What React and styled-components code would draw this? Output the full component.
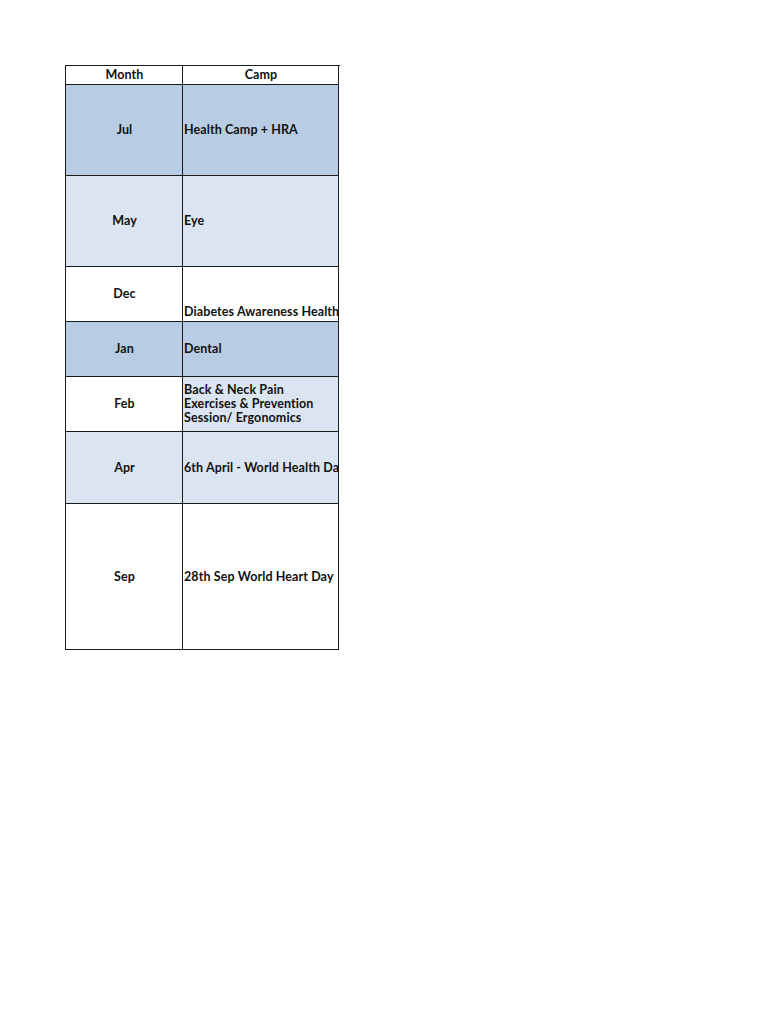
import React from "react";
import styled, { createGlobalStyle } from "styled-components";

const Global = createGlobalStyle`
  html, body { margin: 0; padding: 0; background: #fff; }
  body { width: 768px; height: 1024px; font-family: "Lato", "Liberation Sans", sans-serif; }
`;

const Page = styled.div`
  padding: 65px 0 0 65px;
`;

const Table = styled.div`
  display: grid;
  grid-template-columns: 117px 156px;
  width: 274px;
  border-top: 1px solid #1a1a1a;
  border-left: 1px solid #1a1a1a;
`;

const Cell = styled.div`
  height: ${(p) => p.$h}px;
  box-sizing: border-box;
  background: ${(p) => p.$bg || "#fff"};
  border-right: 1px solid #1a1a1a;
  border-bottom: 1px solid #1a1a1a;
  display: flex;
  align-items: ${(p) => (p.$bottom ? "flex-end" : "center")};
  justify-content: ${(p) => (p.$center ? "center" : "flex-start")};
  padding: ${(p) => (p.$bottom ? "0 0 2px 1px" : "0 0 0 1px")};
  overflow: hidden;
  font-size: 12.5px;
  font-weight: 700;
  color: #111;
  line-height: 14px;
  letter-spacing: 0.1px;
`;

const Text = styled.span`
  white-space: nowrap;
  text-align: ${(p) => (p.$center ? "center" : "left")};
`;

const DARK = "#b8cce4";
const LIGHT = "#dbe5f1";

const rows = [
  { m: "Month", c: ["Camp"], h: 19, mb: "#fff", cb: "#fff", head: true },
  { m: "Jul", c: ["Health Camp + HRA"], h: 91, mb: DARK, cb: DARK },
  { m: "May", c: ["Eye"], h: 91, mb: LIGHT, cb: LIGHT },
  { m: "Dec", c: ["Diabetes Awareness Health Talk"], h: 55, mb: "#fff", cb: "#fff", bottom: true },
  { m: "Jan", c: ["Dental"], h: 55, mb: DARK, cb: DARK },
  { m: "Feb", c: ["Back & Neck Pain", "Exercises & Prevention", "Session/ Ergonomics"], h: 55, mb: "#fff", cb: LIGHT },
  { m: "Apr", c: ["6th April - World Health Day"], h: 72, mb: LIGHT, cb: LIGHT },
  { m: "Sep", c: ["28th Sep World Heart Day"], h: 146, mb: "#fff", cb: "#fff" },
];

export default function App() {
  return (
    <>
      <Global />
      <Page>
        <Table>
          {rows.map((r) => (
            <React.Fragment key={r.m}>
              <Cell $h={r.h} $bg={r.mb} $center>
                <Text $center>{r.m}</Text>
              </Cell>
              <Cell $h={r.h} $bg={r.cb} $center={r.head} $bottom={r.bottom}>
                <Text>
                  {r.c.map((line, i) => (
                    <React.Fragment key={i}>
                      {i > 0 && <br />}
                      {line}
                    </React.Fragment>
                  ))}
                </Text>
              </Cell>
            </React.Fragment>
          ))}
        </Table>
      </Page>
    </>
  );
}
